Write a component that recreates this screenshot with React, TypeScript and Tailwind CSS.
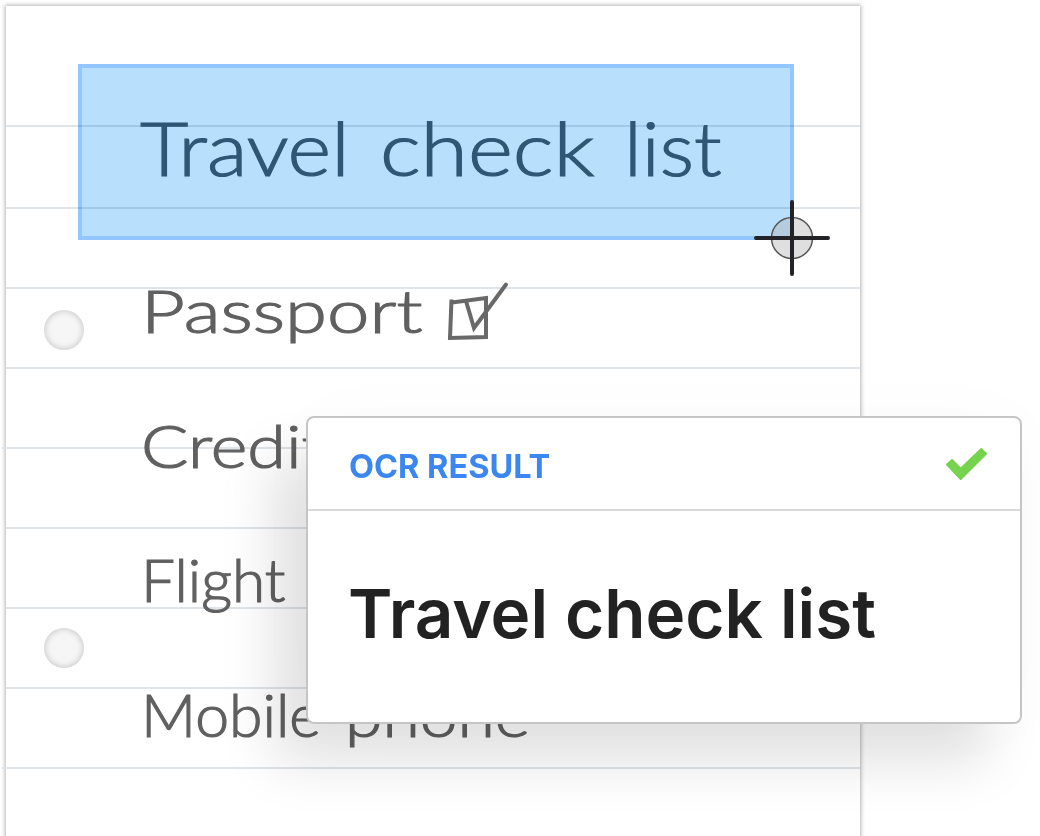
import React, { useLayoutEffect, useRef, useState } from "react";

// stretches a word sideways so it takes up the given width
function Word({ text, width }: { text: string; width: number }) {
  const ref = useRef<HTMLSpanElement>(null);
  const [scale, setScale] = useState(1);

  useLayoutEffect(() => {
    if (ref.current) {
      setScale(width / ref.current.offsetWidth);
    }
  }, [width]);

  return (
    <span className="block shrink-0" style={{ width }}>
      <span
        ref={ref}
        className="inline-block origin-left whitespace-nowrap"
        style={{ transform: `scaleX(${scale})` }}
      >
        {text}
      </span>
    </span>
  );
}

function Row({ children, wide }: { children?: React.ReactNode; wide?: boolean }) {
  return (
    <div
      className={
        "flex h-20 items-start border-b-2 border-[#dfe4e9] text-[59px] leading-[44px] text-[#606060] " +
        (wide ? "-ml-1 pl-[139px]" : "pl-[135px]")
      }
    >
      {children}
    </div>
  );
}

function Hole() {
  return (
    <div className="h-10 w-10 rounded-full bg-[#f6f6f6] shadow-[inset_0_0_6px_1px_rgba(0,0,0,0.18)]" />
  );
}

function Checkbox() {
  return (
    <svg
      className="-mt-2 ml-6 shrink-0"
      width="64"
      height="62"
      viewBox="446 281 64 62"
      fill="none"
      stroke="#696969"
      strokeWidth="4"
    >
      <path d="M451.5 299.5L450 338L486 337V298L452 302.5" />
      <path d="M466 301L474 328L506 284.500" strokeLinecap="round" />
    </svg>
  );
}

function Paper() {
  return (
    <div className="relative mt-1.5 ml-1.5 h-[900px] w-[854px] bg-white font-['Lato','Open_Sans',sans-serif] font-light shadow-[0_0_4px_1px_rgba(0,0,0,0.3)] [-webkit-text-stroke-width:1.2px]">
      <div className="h-[121px] border-b-2 border-[#dfe4e9]" />
      <div className="flex h-[82px] items-start gap-[30px] border-b-2 border-[#dfe4e9] pl-[134px] text-[74px] leading-[41px] text-[#416376]">
        <Word text="Travel" width={210} />
        <Word text="check" width={214} />
        <Word text="list" width={98} />
      </div>
      <Row />
      <Row>
        <div className="flex">
          <Word text="Passport" width={281} />
          <Checkbox />
        </div>
      </Row>
      <Row wide />
      <Row>
        <div className="-mt-[25px]">
          <Word text="Credit" width={184} />
        </div>
      </Row>
      <Row>
        <div className="mt-[29px]">
          <Word text="Flight" width={144} />
        </div>
      </Row>
      <Row />
      <Row wide>
        <div className="mt-1 flex gap-6">
          <Word text="Mobile" width={180} />
          <Word text="phone" width={185} />
        </div>
      </Row>
      <div className="absolute top-[304px] left-[38px] flex flex-col gap-[278px]">
        <Hole />
        <Hole />
      </div>
    </div>
  );
}

function Selection() {
  return (
    <>
      <div className="absolute top-16 left-[78px] h-44 w-[716px] border-4 border-[#93c5fe] bg-[#b8e0fd] mix-blend-multiply" />
      <svg className="absolute top-[198px] left-[752px]" width="80" height="80" viewBox="0 0 80 80">
        <circle cx="40" cy="40" r="20.5" fill="#b0b0b0" fillOpacity="0.4" stroke="#555" strokeWidth="1.500" />
        <path d="M4 40H76M40 4V76" stroke="#232227" strokeWidth="4" strokeLinecap="round" />
      </svg>
    </>
  );
}

function Result() {
  return (
    <div className="absolute top-[416px] left-[306px] h-[308px] w-[716px] rounded-lg border-2 border-[#c5c5c5] bg-white font-['Inter',sans-serif] shadow-[-34px_40px_54px_rgba(0,0,0,0.115),0_0_80px_rgba(0,0,0,0.02)]">
      <div className="flex h-[93px] items-center justify-between border-b-2 border-[#d9d9d9] pr-8 pl-[41px]">
        <h2 className="pt-[7px] text-[32px] leading-9 font-bold text-[#3b86f0]">
          <Word text="OCR RESULT" width={201} />
        </h2>
        <svg width="43" height="34" viewBox="0 0 43 34">
          <path
            d="M2 17.500L7 13L15.700 21.700L36.300 2L41 6.700L15.700 32Z"
            fill="#76d34d"
            stroke="#76d34d"
            strokeWidth="2"
            strokeLinejoin="round"
          />
        </svg>
      </div>
      <div className="flex h-[203px] items-center pl-10 text-[68px] font-semibold text-[#222222]">
        <Word text="Travel check list" width={528} />
      </div>
    </div>
  );
}

export default function App() {
  return (
    <div className="relative h-[836px] w-[1040px] overflow-hidden bg-white">
      <div className="flex">
        <Paper />
      </div>
      <Selection />
      <Result />
    </div>
  );
}
